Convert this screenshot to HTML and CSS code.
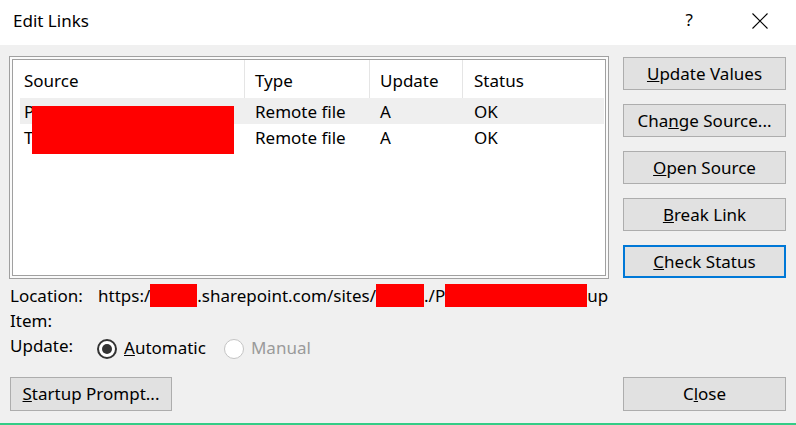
FILE: index.html
```html
<!DOCTYPE html>
<html>
<head>
<meta charset="utf-8">
<title>Edit Links</title>
<link rel="stylesheet" href="styles.css">
</head>
<body>
<div class="window">
  <div class="titlebar">
    <div class="title">Edit Links</div>
    <div class="title-controls">
      <span class="help">?</span>
      <svg class="close-x" width="16" height="16" viewBox="0 0 16 16"><path d="M0.5 0.5 L15.5 15.5 M15.5 0.5 L0.5 15.5" stroke="#000" stroke-width="1.1" fill="none"/></svg>
    </div>
  </div>
  <div class="content">
    <div class="left">
      <div class="listframe">
        <div class="list">
          <div class="header">
            <div class="col c1">Source</div>
            <div class="col c2">Type</div>
            <div class="col c3">Update</div>
            <div class="col c4">Status</div>
          </div>
          <div class="row sel">
            <div class="col c1">P</div>
            <div class="col c2">Remote file</div>
            <div class="col c3">A</div>
            <div class="col c4">OK</div>
          </div>
          <div class="row">
            <div class="col c1">T</div>
            <div class="col c2">Remote file</div>
            <div class="col c3">A</div>
            <div class="col c4">OK</div>
          </div>
          <div class="redact list-redact"></div>
        </div>
      </div>
      <div class="info">
        <div class="line"><span class="label">Location:</span><span class="url">https:/<span class="redact r1"></span>.sharepoint.com/sites/<span class="redact r2"></span>./P<span class="redact r3"></span>up</span></div>
        <div class="line"><span class="label">Item:</span></div>
        <div class="line"><span class="label">Update:</span>
          <span class="radio on"></span><span class="rlabel"><u>A</u>utomatic</span>
          <span class="radio off"></span><span class="rlabel disabled">Manual</span>
        </div>
      </div>
    </div>
    <div class="buttons">
      <div class="btn"><u>U</u>pdate Values</div>
      <div class="btn">Cha<u>n</u>ge Source...</div>
      <div class="btn"><u>O</u>pen Source</div>
      <div class="btn"><u>B</u>reak Link</div>
      <div class="btn focus"><u>C</u>heck Status</div>
    </div>
  </div>
  <div class="footer">
    <div class="btn startup"><u>S</u>tartup Prompt...</div>
    <div class="btn close">C<u>l</u>ose</div>
  </div>
</div>
</body>
</html>
```
FILE: styles.css
```css
html, body {
  margin: 0;
  padding: 0;
}
body {
  width: 796px;
  height: 425px;
  overflow: hidden;
  font-family: "Noto Sans", "Open Sans", sans-serif;
  font-size: 17px;
  color: #000;
  background: #f0f0f0;
}
.window {
  height: 425px;
  box-sizing: border-box;
  border-bottom: 2px solid #34cc86;
  display: flex;
  flex-direction: column;
}
.titlebar {
  height: 45px;
  flex: none;
  background: #fff;
  display: flex;
  justify-content: space-between;
  align-items: flex-start;
}
.title {
  padding: 9px 0 0 13px;
  line-height: 24px;
}
.title-controls {
  display: flex;
  align-items: flex-start;
  padding-top: 6px;
}
.help {
  line-height: 24px;
  margin-right: 59px;
  padding-top: 2px;
}
.close-x {
  margin-top: 7px;
  margin-right: 28px;
}
.content {
  display: flex;
  padding: 11px 0 0 9px;
  gap: 14px;
}
.left {
  width: 600px;
}
.listframe {
  height: 223px;
  box-sizing: border-box;
  border: 1px solid #a0a0a0;
  padding: 2px;
  background: #fafafa;
}
.list {
  position: relative;
  height: 100%;
  box-sizing: border-box;
  border: 1px solid #a0a0a0;
  background: #fff;
}
.header {
  display: flex;
  height: 38px;
  align-items: stretch;
}
.header .col {
  display: flex;
  align-items: center;
  border-right: 1px solid #e5e5e5;
  line-height: 24px;
  padding-top: 3px;
}
.header .col.c4 {
  border-right: none;
}
.col {
  box-sizing: border-box;
  white-space: nowrap;
}
.c1 { width: 232px; padding-left: 11px; }
.c2 { width: 125px; padding-left: 10px; }
.c3 { width: 93px; padding-left: 10px; }
.c4 { flex: 1; padding-left: 11px; }
.row {
  display: flex;
  height: 26px;
  box-sizing: border-box;
  padding-top: 2px;
  line-height: 24px;
  margin-left: 7px;
  margin-right: 1px;
}
.row .c1 {
  width: 225px;
  padding-left: 4px;
}
.row.sel {
  background: #efefef;
}
.redact {
  background: #ff0000;
  display: inline-block;
}
.list-redact {
  position: absolute;
  left: 19px;
  top: 46px;
  width: 202px;
  height: 48px;
}
.info {
  margin-top: 4px;
  padding-left: 1px;
}
.line {
  display: flex;
  align-items: flex-start;
  height: 25px;
  line-height: 24px;
  white-space: nowrap;
}
.line:first-child {
  padding-top: 1px;
}
.label {
  width: 88px;
  flex: none;
}
.url {
  display: flex;
  align-items: flex-start;
}
.r1 { width: 47px; height: 23px; }
.r2 { width: 48px; height: 23px; }
.r3 { width: 142px; height: 23px; }
.radio {
  width: 20px;
  height: 20px;
  box-sizing: border-box;
  border-radius: 50%;
  margin-top: 5px;
  flex: none;
  background: #fff;
  position: relative;
}
.radio.on {
  margin-left: -1px;
  border: 2px solid #333;
}
.radio.on::after {
  content: "";
  position: absolute;
  left: 3px;
  top: 3px;
  width: 10px;
  height: 10px;
  border-radius: 50%;
  background: #333;
}
.radio.off {
  border: 1px solid #c4c4c4;
  margin-left: 18px;
}
.rlabel {
  margin-left: 7px;
  padding-top: 2px;
}
.rlabel.disabled {
  color: #9a9a9a;
}
.buttons {
  width: 163px;
  display: flex;
  flex-direction: column;
  gap: 14px;
  padding-top: 1px;
}
.btn {
  height: 33px;
  box-sizing: border-box;
  border: 1px solid #adadad;
  background: #e1e1e1;
  display: flex;
  align-items: center;
  justify-content: center;
  line-height: 24px;
  white-space: nowrap;
}
.btn.focus {
  border: 2px solid #0078d7;
}
.btn u {
  text-underline-offset: 1px;
}
.footer {
  margin-top: auto;
  display: flex;
  justify-content: space-between;
  padding: 0 10px 12px 10px;
}
.footer .btn {
  height: 34px;
}
.startup {
  width: 162px;
}
.close {
  width: 163px;
}
```
